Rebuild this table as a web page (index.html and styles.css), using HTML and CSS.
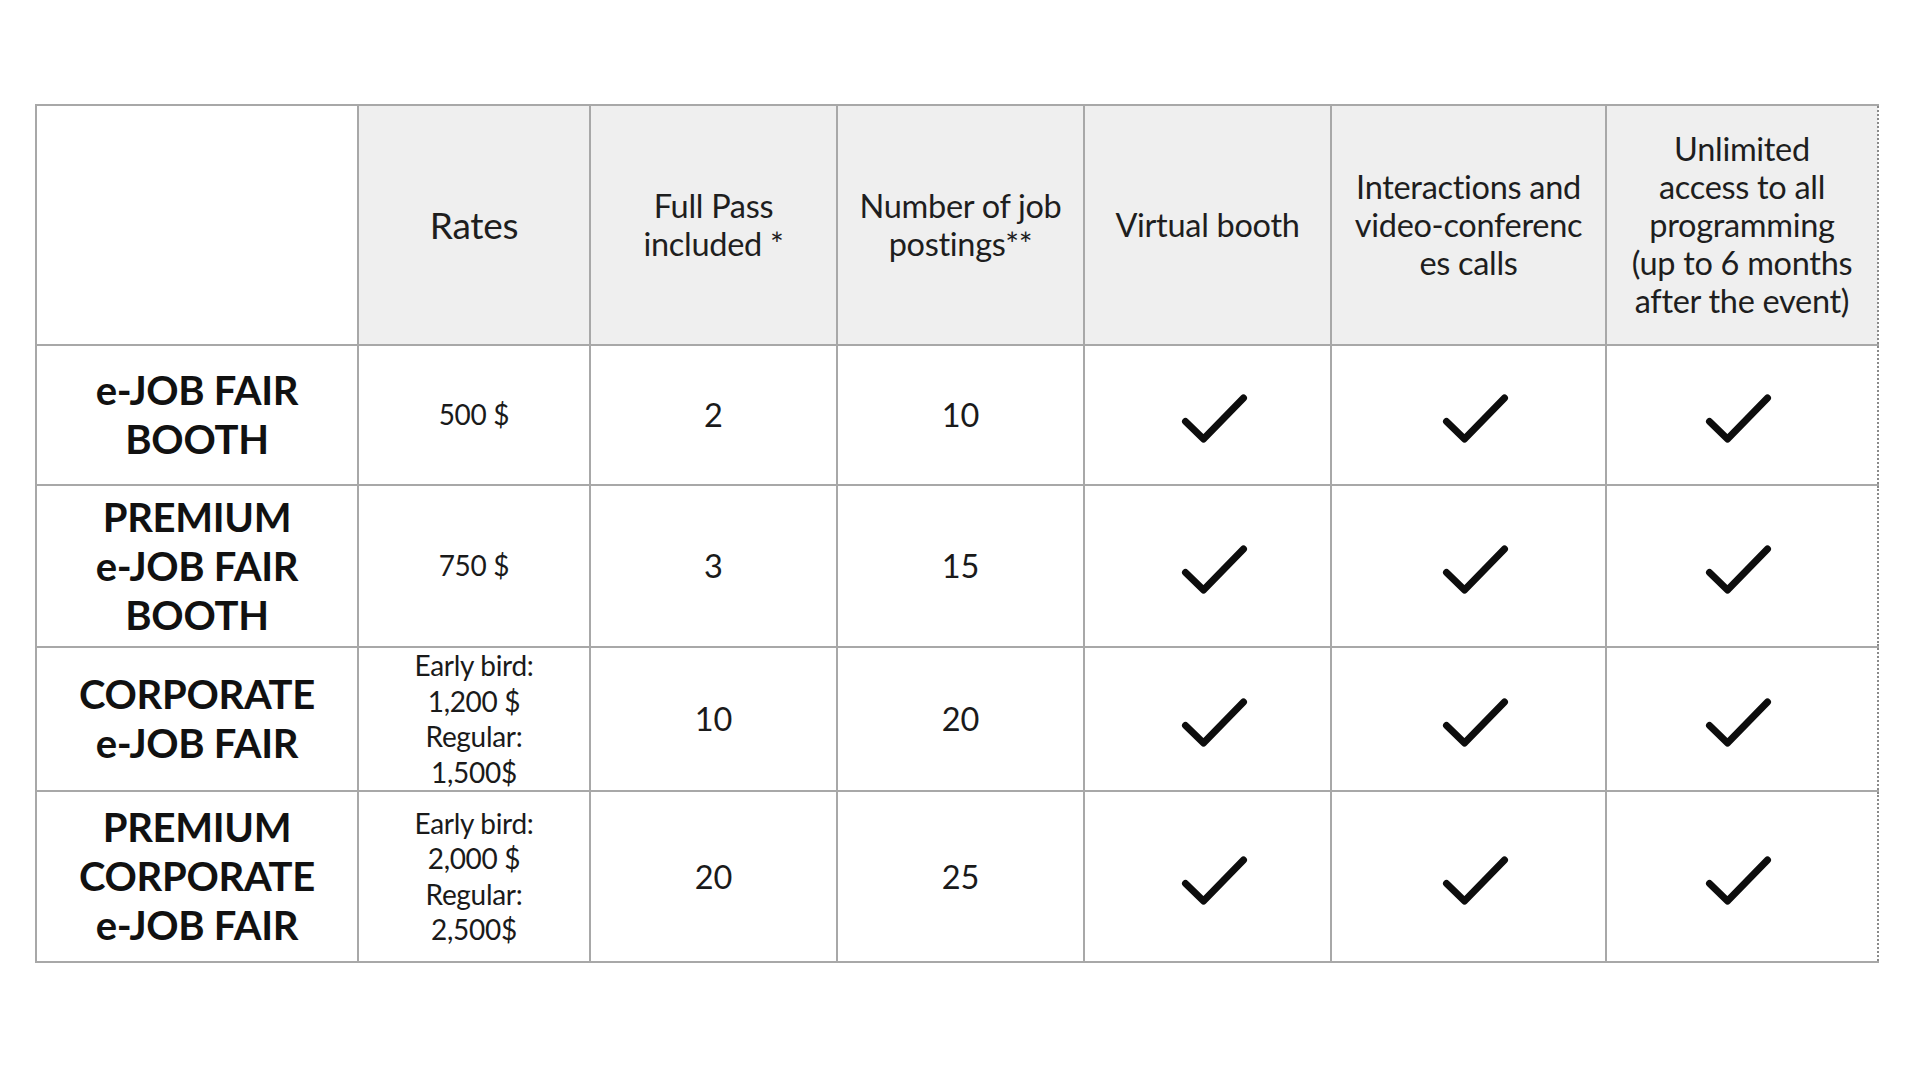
FILE: index.html
```html
<!DOCTYPE html>
<html lang="en">
<head>
<meta charset="utf-8">
<title>e-JOB FAIR rates</title>
<link rel="stylesheet" href="styles.css">
</head>
<body>
<div class="page">
<table class="rates">
  <colgroup>
    <col class="c-label"><col class="c-rate"><col class="c-n"><col class="c-n"><col class="c-n"><col class="c-wide"><col class="c-last">
  </colgroup>
  <thead>
    <tr class="r-head">
      <th class="blank"></th>
      <th class="big">Rates</th>
      <th>Full Pass<br>included *</th>
      <th>Number of job<br>postings**</th>
      <th>Virtual booth</th>
      <th>Interactions and<br>video-conferenc<br>es calls</th>
      <th class="last">Unlimited<br>access to all<br>programming<br>(up to 6 months<br>after the event)</th>
    </tr>
  </thead>
  <tbody>
    <tr class="r1">
      <td class="label">e-JOB FAIR<br>BOOTH</td>
      <td class="rate">500 $</td>
      <td class="num">2</td>
      <td class="num">10</td>
      <td class="chk"><svg viewBox="0 0 80 60" width="80" height="60"><polyline points="17.5,36.5 35.5,54 75.5,13"/></svg></td>
      <td class="chk"><svg viewBox="0 0 80 60" width="80" height="60"><polyline points="17.5,36.5 35.5,54 75.5,13"/></svg></td>
      <td class="chk last"><svg viewBox="0 0 80 60" width="80" height="60"><polyline points="17.5,36.5 35.5,54 75.5,13"/></svg></td>
    </tr>
    <tr class="r2">
      <td class="label">PREMIUM<br>e-JOB FAIR<br>BOOTH</td>
      <td class="rate">750 $</td>
      <td class="num">3</td>
      <td class="num">15</td>
      <td class="chk"><svg viewBox="0 0 80 60" width="80" height="60"><polyline points="17.5,36.5 35.5,54 75.5,13"/></svg></td>
      <td class="chk"><svg viewBox="0 0 80 60" width="80" height="60"><polyline points="17.5,36.5 35.5,54 75.5,13"/></svg></td>
      <td class="chk last"><svg viewBox="0 0 80 60" width="80" height="60"><polyline points="17.5,36.5 35.5,54 75.5,13"/></svg></td>
    </tr>
    <tr class="r3">
      <td class="label">CORPORATE<br>e-JOB FAIR</td>
      <td class="rate">Early bird:<br>1,200 $<br>Regular:<br>1,500$</td>
      <td class="num">10</td>
      <td class="num">20</td>
      <td class="chk"><svg viewBox="0 0 80 60" width="80" height="60"><polyline points="17.5,36.5 35.5,54 75.5,13"/></svg></td>
      <td class="chk"><svg viewBox="0 0 80 60" width="80" height="60"><polyline points="17.5,36.5 35.5,54 75.5,13"/></svg></td>
      <td class="chk last"><svg viewBox="0 0 80 60" width="80" height="60"><polyline points="17.5,36.5 35.5,54 75.5,13"/></svg></td>
    </tr>
    <tr class="r4">
      <td class="label">PREMIUM<br>CORPORATE<br>e-JOB FAIR</td>
      <td class="rate">Early bird:<br>2,000 $<br>Regular:<br>2,500$</td>
      <td class="num">20</td>
      <td class="num">25</td>
      <td class="chk"><svg viewBox="0 0 80 60" width="80" height="60"><polyline points="17.5,36.5 35.5,54 75.5,13"/></svg></td>
      <td class="chk"><svg viewBox="0 0 80 60" width="80" height="60"><polyline points="17.5,36.5 35.5,54 75.5,13"/></svg></td>
      <td class="chk last"><svg viewBox="0 0 80 60" width="80" height="60"><polyline points="17.5,36.5 35.5,54 75.5,13"/></svg></td>
    </tr>
  </tbody>
</table>
</div>
</body>
</html>
```
FILE: styles.css
```css
html, body {
  margin: 0;
  padding: 0;
  background: #ffffff;
}

body {
  width: 1920px;
  height: 1080px;
  overflow: hidden;
  font-family: Lato, "Open Sans", "Liberation Sans", sans-serif;
  color: #141414;
}

.page {
  padding: 104px 0 0 35px;
}

.rates {
  border-collapse: collapse;
  table-layout: fixed;
  width: 1842px;
}

.c-label { width: 322px; }
.c-rate { width: 232px; }
.c-n { width: 247px; }
.c-wide { width: 275px; }
.c-last { width: 272px; }

.rates th,
.rates td {
  border: 2px solid #a8a8a8;
  padding: 0;
  text-align: center;
  vertical-align: middle;
}

.rates th.last,
.rates td.last {
  border-right: 2px dotted #8a8a8a;
}

.rates th {
  background: #efefef;
  font-weight: 400;
  font-size: 32.5px;
  line-height: 38px;
  letter-spacing: -0.3px;
  color: #1e1e1e;
}

.rates th.big {
  font-size: 37px;
}

.rates th.blank {
  background: #ffffff;
}

.r-head { height: 240px; }
.r1 { height: 140px; }
.r2 { height: 162px; }
.r3 { height: 143px; }
.r4 { height: 171px; }

.label {
  font-weight: 700;
  font-size: 40px;
  line-height: 49px;
  letter-spacing: -0.3px;
  color: #111111;
}

.rate {
  font-size: 28px;
  line-height: 35.5px;
  letter-spacing: -0.3px;
  color: #1a1a1a;
}

.num {
  font-size: 32.5px;
  line-height: 38px;
  color: #1a1a1a;
}

.chk svg {
  display: block;
  margin: 0 auto;
}

.chk.last svg {
  margin-left: 85px;
}

.chk polyline {
  fill: none;
  stroke: #0d0d0d;
  stroke-width: 7;
  stroke-linecap: round;
  stroke-linejoin: round;
}
```
